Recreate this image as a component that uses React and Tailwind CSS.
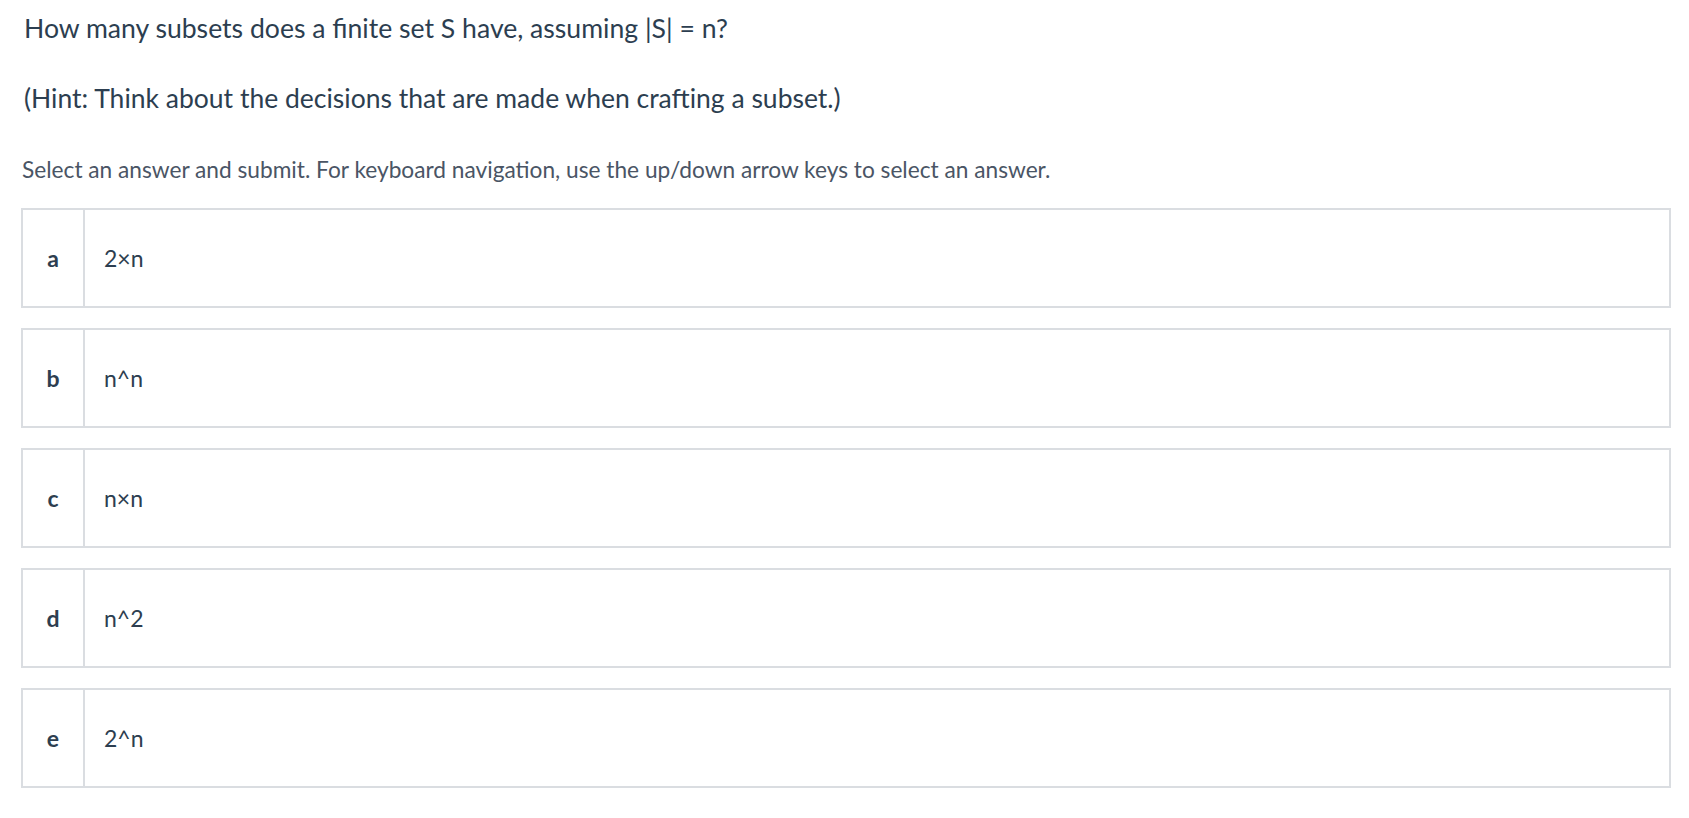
import React from "react";

const answers = [
  { key: "a", text: "2×n" },
  { key: "b", text: "n^n" },
  { key: "c", text: "n×n" },
  { key: "d", text: "n^2" },
  { key: "e", text: "2^n" },
];

const AnswerRow = ({ item }) => (
  <div className="flex h-[100px] border-2 border-[#dadde1] bg-white">
    <div className="flex w-[62px] shrink-0 items-center justify-center border-r-2 border-[#dadde1] text-[23px] font-bold text-[#2d3e50]">
      {item.key}
    </div>
    <div className="flex items-center pl-[19px] text-[23px] text-[#2d3e50]">
      {item.text}
    </div>
  </div>
);

export default function App() {
  return (
    <div
      className="min-h-screen bg-white pl-[21px] pr-[18px] pt-[8px]"
      style={{ fontFamily: "Lato, 'Open Sans', sans-serif" }}
    >
      <p className="h-[40px] pl-[3px] text-[26.6px] leading-[40px] text-[#2c3e50]">
        How many subsets does a finite set S have, assuming |S| = n?
      </p>
      <p className="mt-[30px] h-[40px] pl-[3px] text-[26.5px] leading-[40px] text-[#2c3e50]">
        (Hint: Think about the decisions that are made when crafting a subset.)
      </p>
      <p className="mt-[37px] h-[30px] pl-[1px] text-[22.7px] leading-[30px] text-[#4a5565]">
        Select an answer and submit. For keyboard navigation, use the up/down arrow keys to select an answer.
      </p>
      <div className="mt-[23px] flex flex-col gap-[20px]">
        {answers.map((item) => (
          <AnswerRow key={item.key} item={item} />
        ))}
      </div>
    </div>
  );
}
